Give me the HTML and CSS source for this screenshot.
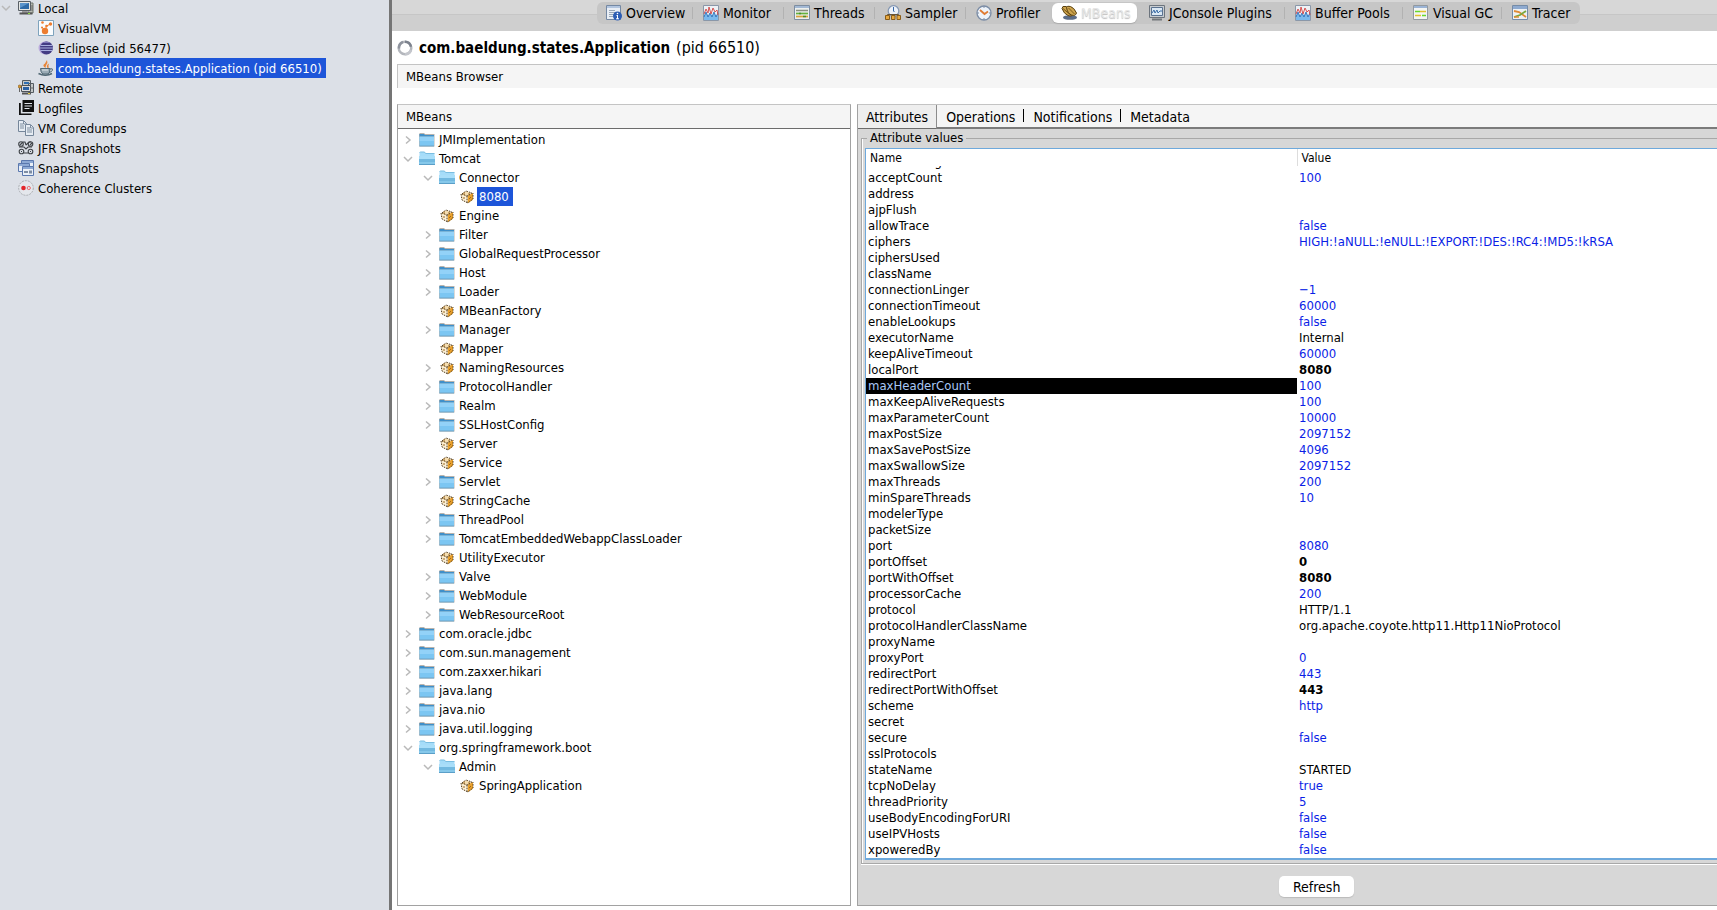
FILE: index.html
```html
<!DOCTYPE html>
<html lang="en">
<head>
<meta charset="utf-8">
<title>VisualVM</title>
<link rel="stylesheet" href="styles.css">
</head>
<body>
<svg class="sprite" aria-hidden="true">
  <symbol id="right" viewBox="0 0 10 10"><path d="M3 1.500 7 5 3 8.500" fill="none" stroke="#b9b9b9" stroke-width="1.500"/></symbol>
  <symbol id="down" viewBox="0 0 10 10"><path d="M1 3 5 7 9 3" fill="none" stroke="#b9b9b9" stroke-width="1.500"/></symbol>
  <symbol id="folder" viewBox="0 0 16 16"><path d="M0 2 1 1h4l1 1h9.500v12.500H0z" fill="#b9b4ae"/><path d="M.5 2h4.500l1 1h9v1.500H.5z" fill="#3f8fc9"/><path d="M.5 4.500H15V14H.5z" fill="#7cc6f2"/><path d="M.5 5H15v4H.5z" fill="#93d2f8"/><path d="M.5 13.500H15v1H.5z" fill="#6fa3c4"/></symbol>
  <symbol id="open" viewBox="0 0 16 16"><path d="M.5 1.500 1.500 1h4l1 1.500h9V8H.5z" fill="#a5dcf9"/><path d="M.5 1.500 1.500 1h4l1 1.500h9" fill="none" stroke="#79bde0"/><path d="M0 5h16v9H0z" fill="#a9def9"/><path d="M0 8h16v6H0z" fill="#72b9e0"/><path d="M0 11h16v3H0z" fill="#86c8ea"/><path d="M0 13.500h16" stroke="#5b9fc8"/></symbol>
  <symbol id="bean" viewBox="0 0 14 14"><path d="m1 4 3-1 2-2 3 1 4 2v6l-5 3-6-3z" fill="#f5ddb0"/><path d="m8 6 5-3v6.500L8 13z" fill="#e9a02b"/><path d="m2 5 5 2v6L3 11z" fill="#fbf0d8"/><path d="m2 4 4-3 6 2-5 3zM7 6v7M1 4l1 6 6 3 5-4V3" fill="none" stroke="#4e3b22" stroke-dasharray="1.500 1.200"/><path d="M4 2v3M9 3v3M3 8h2M9 9l2-2" stroke="#9c6a20"/></symbol>
  <symbol id="local" viewBox="0 0 16 16"><path d="M10 3h5v10h-5z" fill="#b9bcb4" stroke="#71766f"/><path d="M11 6h4M11 8h4M11 10h4" stroke="#666"/><path d="M.5 1.500h12v9H.5z" fill="#e4e6e4" stroke="#596066"/><path d="M2 3h9v6H2z" fill="#2e6ba8"/><path d="M2 3h9L2 8z" fill="#5b95cc"/><path d="M4 11h5v2H4z" fill="#999"/><path d="M1.500 13.500h13" stroke="#555" stroke-width="2"/><path d="M10 13.500h2" stroke="#8ade3c"/></symbol>
  <symbol id="vvm" viewBox="0 0 16 16"><path d="M.5.5h15v15H.5z" fill="#fafcfe" stroke="#7ea3bd"/><g fill="#ec7d31"><circle cx="7" cy="11" r="3.200"/><circle cx="4.500" cy="2.500" r="1.300"/><circle cx="12.500" cy="4" r="1.700"/><circle cx="8.500" cy="6" r="1.300"/><circle cx="4" cy="7.500" r="1"/></g><path d="m7 11 1.500-5 4-2M7 11 4 7" stroke="#ec7d31" fill="none"/></symbol>
  <symbol id="eclipse" viewBox="0 0 16 16"><circle cx="7" cy="8" r="6.500" fill="#b9a9dc"/><circle cx="8.500" cy="8" r="6.500" fill="#433c83"/><path d="M2.500 5.500h12M2 8h13M2.500 10.500h12" stroke="#a9b0df" stroke-width="1.200"/><path d="M4 3q4-3 9 0z" fill="#7e78ba"/></symbol>
  <symbol id="java" viewBox="0 0 16 16"><path d="M7.500 8Q3.500 5.500 7 3.500L9 0q1 3-.5 4.500Q7.500 6 7.500 8zM9.500 8Q7.500 5.500 11 3.500q-1 2 0 4z" fill="#e8863a"/><path d="M2.500 8.500h9.500q0 4.500-2 5.500H5Q2.500 12.500 2.500 8.500z" fill="#9aabb5" stroke="#526975"/><path d="M12 9q3-1 2.500 1T11 12.500" fill="none" stroke="#526975"/><path d="M.5 13.500q7 3.500 13.500 0" fill="none" stroke="#526975" stroke-width="1.500"/><path d="M4 10h6" stroke="#dfe8ec"/></symbol>
  <symbol id="remote" viewBox="0 0 16 16"><path d="M4.500.500h8v5h-8zM10.500 3.500h5v9h-5z" fill="#c5c8c8" stroke="#555c62"/><path d="M6 2h5v2H6z" fill="#2f6fb2"/><path d="M3.500 5.500h9v6h-9z" fill="#ddd" stroke="#4c5258"/><path d="M5 7h6v3H5z" fill="#2b62a5"/><path d="M4 13.500h9" stroke="#555" stroke-width="2"/><circle cx="1.700" cy="6.500" r="1.500" fill="#d79834" stroke="#7e5615" stroke-width=".6"/><path d="M1.500 8v4M12 8h3" stroke="#666"/><path d="M10 13.500h2" stroke="#e6ce3d"/></symbol>
  <symbol id="logs" viewBox="0 0 16 16"><path d="M4.500 0H16v12H4.500z" fill="#111"/><path d="M1 3h1.800v10.500H13.500V15H1z" fill="#111"/><path d="M6.500 3.500h7.500M6.500 6h7.500M6.500 8.500h5" stroke="#dfe3ea" stroke-width="1.200"/></symbol>
  <symbol id="dump" viewBox="0 0 16 16"><g fill="#e6ecf3" stroke="#75869a"><path d="M.5.500h5l3 3v8h-8z"/><path d="M7.500 4.500h5l3 3v8h-8z"/></g><path d="M2 4h3M2 6h4M2 8h4M9 8h3M9 10h5M9 12h5M5.500 1v3h3M12.500 5v3h3" stroke="#7f8fa1" fill="none"/></symbol>
  <symbol id="jfr" viewBox="0 0 16 16"><g fill="none" stroke="#3f4348" stroke-width="1.100"><circle cx="3" cy="4" r="2.300"/><circle cx="12.500" cy="4" r="2.300"/><circle cx="3.500" cy="11.500" r="2.300"/><circle cx="12.500" cy="11.500" r="2.300"/><path d="m2 5 3-3h2l1 3M8 5l3-3h2M1 7h5l2 2 2-2h4M2 5l2-2M12 5l2-2M3 11.500h1M12 11.500h1M6 13h4"/></g></symbol>
  <symbol id="snap" viewBox="0 0 16 16"><g fill="#eaf0f8" stroke="#5a78ae"><path d="M3.500.500h12v9h-12z"/><path d="M.5 3.500h11v8H.5z"/><path d="M4.500 6.500h11v9h-11z"/></g><path d="M4 2h11M1 5h10M5 8h10" stroke="#6f91c7" stroke-width="1.500"/><path d="M6 11h4v2H6zM11 10.500h3v3h-3z" fill="#7d8da4"/></symbol>
  <symbol id="coh" viewBox="0 0 16 16"><circle cx="8" cy="8" r="7.300" fill="#e4e7ec" stroke="#a9acb1" stroke-dasharray="2 1"/><circle cx="5.500" cy="8" r="2.300" fill="#e3262a"/><circle cx="10.800" cy="8" r="1.600" fill="none" stroke="#e86c70"/></symbol>
  <symbol id="overview" viewBox="0 0 16 16"><path d="M.5.500h14v14H.5z" fill="#e9eef5" stroke="#7488a3"/><path d="M1 1h13v2H1z" fill="#b2c5df"/><path d="M3 5.500h6M3 7.500h9M3 9.500h5M3 11.500h4" stroke="#9aa7b8"/><circle cx="11.500" cy="11" r="4.500" fill="#2d5db4"/><path d="M11.500 10v4M10.500 10.500h1M10 13.800h3" stroke="#fff"/><circle cx="11.500" cy="8.500" r=".8" fill="#fff"/></symbol>
  <symbol id="monitor" viewBox="0 0 16 16"><path d="M.5.500h15v15H.5z" fill="#eef1f5" stroke="#8a97a8"/><path d="m1 11 2-3 2 3 2-3 2 3 2-3 2 3 2-3v7H1z" fill="#7bb9ec"/><path d="m1 12 2-5 2 5 2-4 2 4 2-5 2 5 2-4" fill="none" stroke="#3a79bd"/><path d="m1 9 2-5 2 4 1-6 2 7 2-6 2 4 2-2 1 5" fill="none" stroke="#d65252"/></symbol>
  <symbol id="threads" viewBox="0 0 16 16"><path d="M.5.500h15v14H.5z" fill="#edf0ee" stroke="#7d8da0"/><path d="M1 1h14v2H1z" fill="#a3b9d5"/><path d="M2 5.500h12" stroke="#8a9080" stroke-width="1.500"/><path d="M2 8.500h12" stroke="#66b23c" stroke-width="1.700"/><path d="M2 11.500h12" stroke="#d9a23a" stroke-width="1.700"/><path d="M5 8.500h2M9 11.500h3" stroke="#4a8f2c" stroke-width="1.700"/></symbol>
  <symbol id="sampler" viewBox="0 0 16 16"><circle cx="8.500" cy="6" r="5.300" fill="#edf2f9" stroke="#8497b3" stroke-width="1.200"/><path d="M8.500 2v4l1 1" fill="none" stroke="#3567a8"/><path d="M2.500 11V9.500h11V11M8 9v3" fill="none" stroke="#66553a"/><g fill="#e7a941" stroke="#8a5c17"><path d="M.5 10.500h4v4h-4zM6.500 10.500h3.500v4H6.500zM12 10.500h3.500v4H12z"/></g></symbol>
  <symbol id="profiler" viewBox="0 0 16 16"><circle cx="8" cy="8" r="7" fill="#eef3fa" stroke="#7c8da6" stroke-width="1.300"/><path d="M8 1v2M8 13v2M1 8h2M13 8h2" stroke="#7c8da6"/><path d="m4 5 4.500 4L12 6.500" fill="none" stroke="#e07b33" stroke-width="1.800"/></symbol>
  <symbol id="beans" viewBox="0 0 16 16"><ellipse cx="9" cy="12.500" rx="7" ry="2.300" fill="#5c6d88"/><g fill="#cda44e" stroke="#58400f"><path d="M1 3.500Q1 .5 5 1.500T12 9q-1 3-5 1.500T1 3.500z"/><path d="M5.500 2.500Q6 .5 9.500 1.500T15.500 8q-1 3.500-5 2T5.500 2.500z"/></g><path d="m2 3.500 7 6M7.500 3l6 6" fill="none" stroke="#7a5a1a"/></symbol>
  <symbol id="jconsole" viewBox="0 0 16 16"><path d="M.5.500h15v12H.5z" fill="#c8ccd0" stroke="#6c747d"/><path d="M2.500 2.500h11v8h-11z" fill="#dbe8f4" stroke="#5a7291"/><path d="m3 8 2-3 1 3 2-3 1 3 2-2h2" fill="none" stroke="#3f70a8"/><path d="M3 14.500h10" stroke="#73777b" stroke-width="2"/></symbol>
  <symbol id="gc" viewBox="0 0 16 16"><path d="M.5.500h14v14H.5z" fill="#f4f5f3" stroke="#92999f"/><path d="M1 1h13v2H1z" fill="#9bb4d6"/><path d="M2 6.500h5M9 10.500h4" stroke="#66d92d" stroke-width="1.500"/><path d="M7 6.500h6M2 10.500h6" stroke="#e3c32c" stroke-width="1.500"/></symbol>
  <symbol id="tracer" viewBox="0 0 16 16"><path d="M.5.500h15v14H.5z" fill="#eef1f3" stroke="#748ba7"/><path d="M1 1h14v3H1z" fill="#8eaad0"/><path d="m2 6 5 1 7 5" fill="none" stroke="#e08a34" stroke-width="1.800"/><path d="m2 12 6-2 6-4" fill="none" stroke="#78a83e" stroke-width="1.800"/><path d="M2 12h5" stroke="#e08a34" stroke-width="1.500"/></symbol>
  <symbol id="spin" viewBox="0 0 16 16"><g fill="none" stroke-width="2.500"><circle cx="8" cy="8" r="6.300" stroke="#b4b7bd"/><path d="M8 1.700a6.300 6.300 0 0 1 6 5" stroke="#7c828d"/><path d="M14 10a6.300 6.300 0 0 1-6 4.300" stroke="#c4c6cc"/><path d="M2 8.500A6.300 6.300 0 0 1 6 2" stroke="#8f949e"/></g></symbol>
</svg>
<div class="app">
  <aside class="sidebar">
    <ul class="apps">
      <li><svg class="arrow"><use href="#down"/></svg><svg class="icon"><use href="#local"/></svg><span>Local</span></li>
      <li class="child"><svg class="icon"><use href="#vvm"/></svg><span>VisualVM</span></li>
      <li class="child"><svg class="icon"><use href="#eclipse"/></svg><span>Eclipse (pid 56477)</span></li>
      <li class="child"><svg class="icon"><use href="#java"/></svg><span class="selected">com.baeldung.states.Application (pid 66510)</span></li>
      <li class="top"><svg class="icon"><use href="#remote"/></svg><span>Remote</span></li>
      <li class="top"><svg class="icon"><use href="#logs"/></svg><span>Logfiles</span></li>
      <li class="top"><svg class="icon"><use href="#dump"/></svg><span>VM Coredumps</span></li>
      <li class="top"><svg class="icon"><use href="#jfr"/></svg><span>JFR Snapshots</span></li>
      <li class="top"><svg class="icon"><use href="#snap"/></svg><span>Snapshots</span></li>
      <li class="top"><svg class="icon"><use href="#coh"/></svg><span>Coherence Clusters</span></li>
    </ul>
  </aside>
  <main class="main">
    <nav class="toolbar">
      <div class="segments">
        <button><svg class="icon"><use href="#overview"/></svg>Overview</button>
        <button><svg class="icon"><use href="#monitor"/></svg>Monitor</button>
        <button><svg class="icon"><use href="#threads"/></svg>Threads</button>
        <button><svg class="icon"><use href="#sampler"/></svg>Sampler</button>
        <button><svg class="icon"><use href="#profiler"/></svg>Profiler</button>
        <button class="current"><svg class="icon"><use href="#beans"/></svg>MBeans</button>
        <button><svg class="icon"><use href="#jconsole"/></svg>JConsole Plugins</button>
        <button><svg class="icon"><use href="#monitor"/></svg>Buffer Pools</button>
        <button><svg class="icon"><use href="#gc"/></svg>Visual GC</button>
        <button><svg class="icon"><use href="#tracer"/></svg>Tracer</button>
      </div>
    </nav>
    <h1 class="title"><svg class="icon"><use href="#spin"/></svg><b>com.baeldung.states.Application</b><span>(pid 66510)</span></h1>
    <div class="browser-bar">MBeans Browser</div>
    <div class="panels">
      <section class="tree-panel">
        <h2 class="panel-head">MBeans</h2>
        <ul class="tree">
          <li><svg class="arrow"><use href="#right"/></svg><svg class="icon"><use href="#folder"/></svg><span>JMImplementation</span></li>
          <li><svg class="arrow"><use href="#down"/></svg><svg class="icon"><use href="#open"/></svg><span>Tomcat</span></li>
          <li class="l2"><svg class="arrow"><use href="#down"/></svg><svg class="icon"><use href="#open"/></svg><span>Connector</span></li>
          <li class="l3 leaf"><svg class="icon"><use href="#bean"/></svg><span class="selected">8080</span></li>
          <li class="l2 leaf"><svg class="icon"><use href="#bean"/></svg><span>Engine</span></li>
          <li class="l2"><svg class="arrow"><use href="#right"/></svg><svg class="icon"><use href="#folder"/></svg><span>Filter</span></li>
          <li class="l2"><svg class="arrow"><use href="#right"/></svg><svg class="icon"><use href="#folder"/></svg><span>GlobalRequestProcessor</span></li>
          <li class="l2"><svg class="arrow"><use href="#right"/></svg><svg class="icon"><use href="#folder"/></svg><span>Host</span></li>
          <li class="l2"><svg class="arrow"><use href="#right"/></svg><svg class="icon"><use href="#folder"/></svg><span>Loader</span></li>
          <li class="l2 leaf"><svg class="icon"><use href="#bean"/></svg><span>MBeanFactory</span></li>
          <li class="l2"><svg class="arrow"><use href="#right"/></svg><svg class="icon"><use href="#folder"/></svg><span>Manager</span></li>
          <li class="l2 leaf"><svg class="icon"><use href="#bean"/></svg><span>Mapper</span></li>
          <li class="l2 leaf"><svg class="arrow"><use href="#right"/></svg><svg class="icon"><use href="#bean"/></svg><span>NamingResources</span></li>
          <li class="l2"><svg class="arrow"><use href="#right"/></svg><svg class="icon"><use href="#folder"/></svg><span>ProtocolHandler</span></li>
          <li class="l2"><svg class="arrow"><use href="#right"/></svg><svg class="icon"><use href="#folder"/></svg><span>Realm</span></li>
          <li class="l2"><svg class="arrow"><use href="#right"/></svg><svg class="icon"><use href="#folder"/></svg><span>SSLHostConfig</span></li>
          <li class="l2 leaf"><svg class="icon"><use href="#bean"/></svg><span>Server</span></li>
          <li class="l2 leaf"><svg class="icon"><use href="#bean"/></svg><span>Service</span></li>
          <li class="l2"><svg class="arrow"><use href="#right"/></svg><svg class="icon"><use href="#folder"/></svg><span>Servlet</span></li>
          <li class="l2 leaf"><svg class="icon"><use href="#bean"/></svg><span>StringCache</span></li>
          <li class="l2"><svg class="arrow"><use href="#right"/></svg><svg class="icon"><use href="#folder"/></svg><span>ThreadPool</span></li>
          <li class="l2"><svg class="arrow"><use href="#right"/></svg><svg class="icon"><use href="#folder"/></svg><span>TomcatEmbeddedWebappClassLoader</span></li>
          <li class="l2 leaf"><svg class="icon"><use href="#bean"/></svg><span>UtilityExecutor</span></li>
          <li class="l2"><svg class="arrow"><use href="#right"/></svg><svg class="icon"><use href="#folder"/></svg><span>Valve</span></li>
          <li class="l2"><svg class="arrow"><use href="#right"/></svg><svg class="icon"><use href="#folder"/></svg><span>WebModule</span></li>
          <li class="l2"><svg class="arrow"><use href="#right"/></svg><svg class="icon"><use href="#folder"/></svg><span>WebResourceRoot</span></li>
          <li><svg class="arrow"><use href="#right"/></svg><svg class="icon"><use href="#folder"/></svg><span>com.oracle.jdbc</span></li>
          <li><svg class="arrow"><use href="#right"/></svg><svg class="icon"><use href="#folder"/></svg><span>com.sun.management</span></li>
          <li><svg class="arrow"><use href="#right"/></svg><svg class="icon"><use href="#folder"/></svg><span>com.zaxxer.hikari</span></li>
          <li><svg class="arrow"><use href="#right"/></svg><svg class="icon"><use href="#folder"/></svg><span>java.lang</span></li>
          <li><svg class="arrow"><use href="#right"/></svg><svg class="icon"><use href="#folder"/></svg><span>java.nio</span></li>
          <li><svg class="arrow"><use href="#right"/></svg><svg class="icon"><use href="#folder"/></svg><span>java.util.logging</span></li>
          <li><svg class="arrow"><use href="#down"/></svg><svg class="icon"><use href="#open"/></svg><span>org.springframework.boot</span></li>
          <li class="l2"><svg class="arrow"><use href="#down"/></svg><svg class="icon"><use href="#open"/></svg><span>Admin</span></li>
          <li class="l3 leaf"><svg class="icon"><use href="#bean"/></svg><span>SpringApplication</span></li>
        </ul>
      </section>
      <section class="detail">
        <div class="tabs">
          <button class="active">Attributes</button>
          <button>Operations</button>
          <button>Notifications</button>
          <button>Metadata</button>
        </div>
        <fieldset class="values">
          <legend>Attribute values</legend>
          <div class="table-box">
            <table>
              <thead><tr><th scope="col">Name</th><th scope="col">Value</th></tr></thead>
              <tbody>
                <tr class="cut"><td><div>URIEncoding</div></td><td><div>UTF-8</div></td></tr>
                <tr><td>acceptCount</td><td>100</td></tr>
                <tr><td>address</td><td></td></tr>
                <tr><td>ajpFlush</td><td></td></tr>
                <tr><td>allowTrace</td><td>false</td></tr>
                <tr><td>ciphers</td><td>HIGH:!aNULL:!eNULL:!EXPORT:!DES:!RC4:!MD5:!kRSA</td></tr>
                <tr><td>ciphersUsed</td><td></td></tr>
                <tr><td>className</td><td></td></tr>
                <tr><td>connectionLinger</td><td>−1</td></tr>
                <tr><td>connectionTimeout</td><td>60000</td></tr>
                <tr><td>enableLookups</td><td>false</td></tr>
                <tr><td>executorName</td><td class="fixed">Internal</td></tr>
                <tr><td>keepAliveTimeout</td><td>60000</td></tr>
                <tr><td>localPort</td><td class="bold">8080</td></tr>
                <tr class="picked"><td>maxHeaderCount</td><td>100</td></tr>
                <tr><td>maxKeepAliveRequests</td><td>100</td></tr>
                <tr><td>maxParameterCount</td><td>10000</td></tr>
                <tr><td>maxPostSize</td><td>2097152</td></tr>
                <tr><td>maxSavePostSize</td><td>4096</td></tr>
                <tr><td>maxSwallowSize</td><td>2097152</td></tr>
                <tr><td>maxThreads</td><td>200</td></tr>
                <tr><td>minSpareThreads</td><td>10</td></tr>
                <tr><td>modelerType</td><td></td></tr>
                <tr><td>packetSize</td><td></td></tr>
                <tr><td>port</td><td>8080</td></tr>
                <tr><td>portOffset</td><td class="bold">0</td></tr>
                <tr><td>portWithOffset</td><td class="bold">8080</td></tr>
                <tr><td>processorCache</td><td>200</td></tr>
                <tr><td>protocol</td><td class="fixed">HTTP/1.1</td></tr>
                <tr><td>protocolHandlerClassName</td><td class="fixed">org.apache.coyote.http11.Http11NioProtocol</td></tr>
                <tr><td>proxyName</td><td></td></tr>
                <tr><td>proxyPort</td><td>0</td></tr>
                <tr><td>redirectPort</td><td>443</td></tr>
                <tr><td>redirectPortWithOffset</td><td class="bold">443</td></tr>
                <tr><td>scheme</td><td>http</td></tr>
                <tr><td>secret</td><td></td></tr>
                <tr><td>secure</td><td>false</td></tr>
                <tr><td>sslProtocols</td><td></td></tr>
                <tr><td>stateName</td><td class="fixed">STARTED</td></tr>
                <tr><td>tcpNoDelay</td><td>true</td></tr>
                <tr><td>threadPriority</td><td>5</td></tr>
                <tr><td>useBodyEncodingForURI</td><td>false</td></tr>
                <tr><td>useIPVHosts</td><td>false</td></tr>
                <tr><td>xpoweredBy</td><td>false</td></tr>
              </tbody>
            </table>
          </div>
        </fieldset>
        <div class="actions"><button>Refresh</button></div>
      </section>
    </div>
  </main>
</div>
</body>
</html>
```

FILE: styles.css
```css
* { box-sizing: border-box; }
body {
  margin: 0;
  font: 13px/16px "DejaVu Sans Condensed", "DejaVu Sans", sans-serif;
  color: #000;
  background: #fff;
}
button { font: inherit; color: inherit; border: 0; background: none; padding: 0; white-space: nowrap; }
ul { list-style: none; margin: 0; padding: 0; }
.sprite { display: none; }
.icon { width: 16px; height: 16px; flex: none; }
.arrow { width: 10px; height: 10px; flex: none; }
.app { display: flex; min-height: 100vh; overflow: hidden; }

.sidebar { flex: 0 0 392px; background: #dce0e7; border-right: 3px solid #757575; overflow: hidden; }
.apps { margin-top: -2px; }
.apps li { display: flex; align-items: center; height: 20px; white-space: nowrap; }
.apps .arrow { margin: 0 7px 0 1px; }
.apps .top { padding-left: 18px; }
.apps .child { padding-left: 38px; }
.apps span { padding: 1px 4px 0 2px; margin-left: 2px; line-height: 19px; }
.selected { background: #1d55d9; color: #fff; }

.main { flex: 1; min-width: 0; display: flex; flex-direction: column; }
.toolbar {
  height: 31px;
  padding: 2px 0 0 205px;
  background: linear-gradient(#d7d7d7 14px, #c6c6c6 14px, #c6c6c6 15px, #cfcfcf 15px);
}
.segments {
  display: inline-grid;
  grid-template-columns: 97px 91px 91px 91px 85px 85px 149px 118px 99px 77px;
  height: 22px;
  border-radius: 6px;
  background: #c6c6c6;
  font-size: 14px;
}
.segments button { display: flex; align-items: center; gap: 4px; padding-left: 9px; position: relative; }
.segments button + button:not(.current):not(.current + button)::before {
  content: ""; position: absolute; left: -2px; top: 5px; width: 1px; height: 12px; background: #b2b2b2;
}
.segments .current { background: #fff; border-radius: 6px; margin: 1px 0; color: #e6e6e6; box-shadow: 0 1px 1px #aaa; text-shadow: 0 1px 1px #bbb; }
.segments .current + button { padding-left: 12px; }

.title { display: flex; align-items: center; gap: 6px; height: 33px; margin: 0; padding-left: 5px; font-size: 15px; font-weight: normal; }
.title span { font-size: 16px; }
.browser-bar { height: 24px; margin-left: 5px; padding-left: 8px; line-height: 24px; background: #f5f5f5; border: 1px solid #c4c4c4; border-width: 1px 0 0 1px; }
.panels { flex: 1; display: flex; gap: 6px; padding: 16px 0 4px 5px; }

.tree-panel { flex: 0 0 454px; border: 1px solid #a2a2a2; border-top-color: #c4c4c4; }
.panel-head { margin: 0; height: 24px; padding-left: 8px; font-size: 13px; font-weight: normal; line-height: 24px; background: #f5f5f5; border-bottom: 1px solid #6c6c6c; }
.tree { padding-top: 1px; }
.tree li { display: flex; align-items: center; height: 19px; padding-left: 5px; }
.tree .l2 { padding-left: 25px; }
.tree .arrow + .icon { margin-left: 6px; }
.tree .leaf .icon { width: 14px; height: 14px; margin: 0 1px; }
.tree .leaf { padding-left: 41px; }
.tree .l3 { padding-left: 61px; }
.tree .leaf .arrow { margin-left: -16px; }
.tree .leaf .arrow + .icon { margin-left: 7px; }
.tree span { margin-left: 2px; padding: 0 4px 0 2px; line-height: 19px; }

.detail { flex: 1; min-width: 0; display: flex; flex-direction: column; background: #d7d7d7; border: 1px solid #a2a2a2; border-right: 0; border-top-color: #c4c4c4; }
.tabs { display: flex; height: 24px; background: #f5f5f5; border-bottom: 2px solid #7b7b7b; font-size: 14px; }
.tabs button { position: relative; padding: 0 9px; height: 23px; }
.tabs .active { height: 24px; padding: 0 8px; background: #eee; border-right: 1px solid #8c8c8c; border-bottom: 1px solid #6c6c6c; }
.tabs button:not(:last-child):not(.active)::after { content: ""; position: absolute; right: 0; top: 4px; width: 1px; height: 13px; background: #000; }

.values { min-width: 0; margin: 1px 0 0 3px; padding: 2px 0 3px 3px; border: 1px solid #a8a8a8; border-right: 0; box-shadow: inset 1px 0 #fff, 0 1px #fff; }
.values legend { margin-left: 2px; padding: 0 3px; line-height: 16px; }
.table-box { background: #fff; border: 1px solid #6ea9dc; border-width: 1px 0 2px 1px; }
table { width: 100%; border-collapse: collapse; table-layout: fixed; }
th { height: 17px; padding: 0 4px; font-size: 12px; font-weight: normal; text-align: left; line-height: 16px; }
th:first-child { width: 431px; }
th + th { border-left: 1px solid #ddd; }
td { height: 16px; padding: 0 2px; line-height: 16px; white-space: nowrap; }
td + td { color: #0a1ee6; }
td.fixed, td.bold { color: #000; }
td.bold { font-weight: bold; }
.cut td { height: 4px; }
.cut div { display: flex; align-items: flex-end; height: 4px; overflow: hidden; }
.picked td:first-child { background: #000; color: #a9c8f5; }
.actions { padding: 12px 0 8px 49%; }
.actions button { height: 21px; padding: 0 14px; border-radius: 5px; background: #fff; box-shadow: 0 1px 1px #bbb; font-size: 14px; }
```
